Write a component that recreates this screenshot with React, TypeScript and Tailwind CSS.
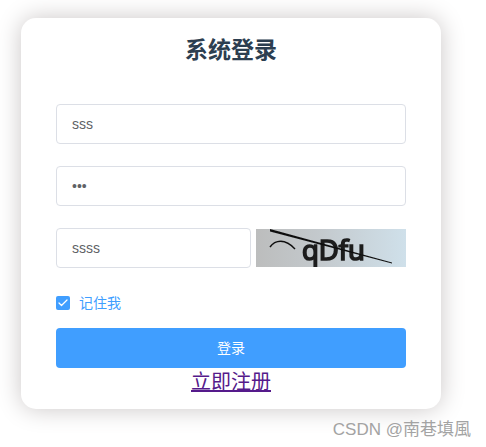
import React from 'react';
import { Check } from 'lucide-react';

const Captcha = () => (
  <svg viewBox="0 0 150 38" className="block w-[150px] h-[38px]">
    <defs>
      <linearGradient id="captchaBg" x1="0" y1="0" x2="1" y2="0">
        <stop offset="0" stopColor="#bcbdbd" />
        <stop offset="0.45" stopColor="#c4cace" />
        <stop offset="1" stopColor="#cfe0ea" />
      </linearGradient>
      <filter id="captchaBlur">
        <feGaussianBlur stdDeviation="0.35" />
      </filter>
    </defs>
    <rect width="150" height="38" fill="url(#captchaBg)" />
    <g filter="url(#captchaBlur)">
      <text x="46" y="31" fontFamily="'Open Sans', sans-serif" fontSize="27" fill="#1c1c1c" stroke="#1c1c1c" strokeWidth="1.7" textLength="63" lengthAdjust="spacingAndGlyphs">qDfu</text>
      <path d="M14 0 L136 33.5 L136 34.5 L14 2.5 Z" fill="#111" />
      <path d="M14 18 C19 11 29 9 39 20" stroke="#111" strokeWidth="1.4" fill="none" />
    </g>
  </svg>
);

const Field = ({ value, type = 'text', className = '' }: { value: string; type?: string; className?: string }) => (
  <input
    readOnly
    type={type}
    value={value}
    className={`h-10 rounded border border-[#dcdfe6] bg-white px-[15px] text-[14px] text-[#606266] outline-none ${className}`}
  />
);

export default function App() {
  return (
    <div className="relative w-[486px] h-[447px] overflow-hidden bg-white pt-[18px] pl-[21px] font-['Liberation_Sans','Noto_Sans_CJK_SC',sans-serif]">
      <div className="w-[420px] h-[391px] rounded-[15px] bg-white px-[35px] shadow-[0_0_25px_#cac6c6]">
        <h3 className="mt-0 pt-[16px] mb-[38px] h-[32px] leading-[32px] box-content text-center text-[23px] font-bold text-[#2c3e50]">
          系统登录
        </h3>
        <div className="flex flex-col gap-[22px]">
          <Field value="sss" className="w-full" />
          <Field value="sss" type="password" className="w-full" />
          <div className="flex items-start gap-[5px]">
            <Field value="ssss" className="w-[195px]" />
            <div className="mt-px">
              <Captcha />
            </div>
          </div>
        </div>
        <label className="mt-[28px] flex h-[14px] items-center gap-[9px]">
          <span className="flex h-[14px] w-[14px] items-center justify-center rounded-[2px] bg-[#409eff]">
            <Check className="h-3 w-3 text-white" strokeWidth={2.5} />
          </span>
          <span className="text-[14px] leading-[14px] text-[#409eff]">记住我</span>
        </label>
        <button className="mt-[18px] block h-10 w-full rounded bg-[#409eff] text-[14px] text-white">
          登录
        </button>
        <div className="text-center leading-[28px] h-[28px]">
          <a href="#" className="text-[20px] text-[#551a8b] underline">
            立即注册
          </a>
        </div>
      </div>
      <div className="absolute right-[15px] top-[420px] text-[17px] leading-[20px] text-[#a3a3a3]">
        CSDN @南巷填風
      </div>
    </div>
  );
}
